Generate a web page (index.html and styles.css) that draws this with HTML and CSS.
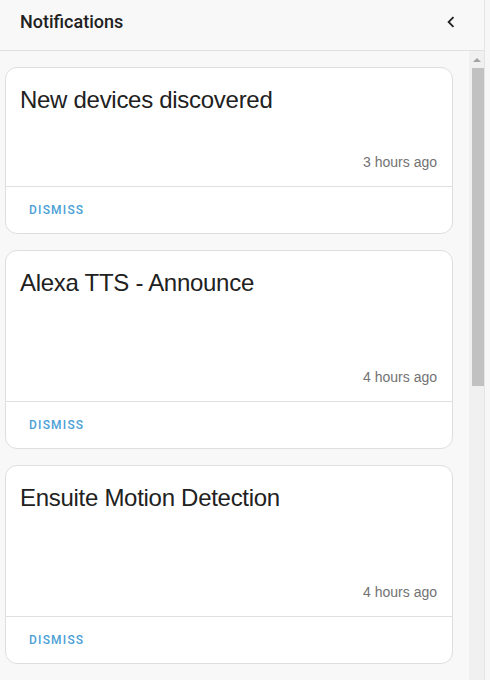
FILE: index.html
```html
<!DOCTYPE html>
<html lang="en">
<head>
<meta charset="utf-8">
<title>Notifications</title>
<link rel="stylesheet" href="styles.css">
</head>
<body>
<div class="drawer">
  <header class="header">
    <span class="header-title">Notifications</span>
    <button class="close" aria-label="Close">
      <svg viewBox="0 0 24 24" width="22" height="22"><path d="M15.41,16.58L10.83,12L15.41,7.41L14,6L8,12L14,18L15.41,16.58Z" fill="#212121"/></svg>
    </button>
  </header>
  <div class="body">
    <div class="list">
      <div class="card">
        <div class="card-title">New devices discovered</div>
        <div class="msg msg-short"></div>
        <div class="time">3 hours ago</div>
        <div class="actions"><span class="btn">Dismiss</span></div>
      </div>
      <div class="card">
        <div class="card-title">Alexa TTS - Announce</div>
        <div class="msg msg-tall"></div>
        <div class="time">4 hours ago</div>
        <div class="actions"><span class="btn">Dismiss</span></div>
      </div>
      <div class="card">
        <div class="card-title">Ensuite Motion Detection</div>
        <div class="msg msg-tall"></div>
        <div class="time">4 hours ago</div>
        <div class="actions"><span class="btn">Dismiss</span></div>
      </div>
    </div>
    <div class="scrollbar">
      <div class="arrow"></div>
      <div class="thumb"></div>
    </div>
  </div>
</div>
</body>
</html>
```
FILE: styles.css
```css
html, body {
  margin: 0;
  padding: 0;
  height: 100%;
  background: #f7f7f7;
}
body {
  font-family: "Liberation Sans", Arial, sans-serif;
  overflow: hidden;
}
.drawer {
  width: 485px;
  height: 680px;
  border-right: 1px solid #e4e4e4;
  box-sizing: border-box;
  display: flex;
  flex-direction: column;
  background: #f8f8f8;
}
.header {
  height: 51px;
  flex: none;
  box-sizing: border-box;
  border-bottom: 1px solid #e0e0e0;
  display: flex;
  align-items: flex-start;
  justify-content: space-between;
  padding: 0 22px 0 20px;
  background: #f8f8f8;
}
.header-title {
  font-family: Roboto, "Liberation Sans", sans-serif;
  font-weight: 500;
  font-size: 18px;
  line-height: 44px;
  color: #212121;
}
.close {
  border: 0;
  background: none;
  padding: 0;
  margin-top: 11px;
  width: 22px;
  height: 22px;
  display: block;
}
.close svg { display: block; }
.body {
  flex: 1;
  display: flex;
  min-height: 0;
}
.list {
  width: 470px;
  box-sizing: border-box;
  padding: 16px 16px 0 5px;
  display: flex;
  flex-direction: column;
  gap: 16px;
  background: #f8f8f8;
}
.card {
  background: #fff;
  border: 1px solid #dedede;
  border-radius: 12px;
  display: flex;
  flex-direction: column;
}
.card-title {
  font-size: 24px;
  letter-spacing: -0.012em;
  line-height: 48px;
  padding: 8px 14px 0;
  color: #212121;
}
.msg-short { height: 28px; }
.msg-tall { height: 60px; }
.time {
  font-size: 14px;
  line-height: 20px;
  color: #727272;
  text-align: right;
  padding: 0 15px 14px;
}
.actions {
  border-top: 1px solid #e0e0e0;
  height: 46px;
  display: flex;
  align-items: center;
  padding-left: 23px;
}
.btn {
  font-family: Roboto, "Liberation Sans", sans-serif;
  font-weight: 500;
  font-size: 12px;
  letter-spacing: 1.2px;
  text-transform: uppercase;
  color: #4b9fd6;
}
.scrollbar {
  width: 15px;
  background: #f0f0f0;
  display: flex;
  flex-direction: column;
  align-items: center;
}
.arrow {
  margin-top: 7px;
  width: 0;
  height: 0;
  border-left: 4px solid transparent;
  border-right: 4px solid transparent;
  border-bottom: 4px solid #a3a3a3;
}
.thumb {
  margin-top: 6px;
  margin-left: 2px;
  width: 12px;
  height: 318px;
  background: #c1c1c1;
}
```
